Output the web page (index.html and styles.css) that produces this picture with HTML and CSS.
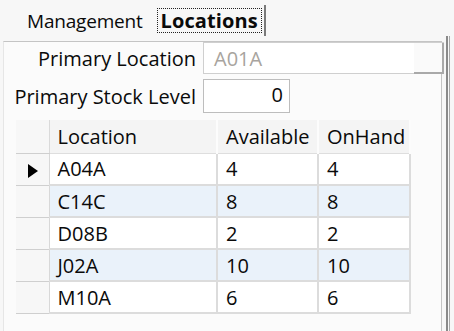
FILE: index.html
```html
<!DOCTYPE html>
<html>
<head>
<meta charset="utf-8">
<link rel="stylesheet" href="styles.css">
</head>
<body>
<div class="window">
  <div class="main">
    <div class="tabs">
      <div class="tab">Management</div>
      <div class="tab active"><span class="focus">Locations</span></div>
    </div>
    <div class="panel">
      <div class="form">
        <label class="lbl lbl1">Primary Location</label>
        <div class="combo">
          <span class="combo-text">A01A</span>
          <span class="combo-btn"></span>
        </div>
        <label class="lbl lbl2">Primary Stock Level</label>
        <div class="textbox">0</div>
      </div>
      <table class="grid">
        <thead>
          <tr>
            <th class="rh"></th>
            <th class="c1">Location</th>
            <th class="c2">Available</th>
            <th class="c3">OnHand</th>
          </tr>
        </thead>
        <tbody>
          <tr><td class="rh"><span class="arrow"></span></td><td>A04A</td><td>4</td><td>4</td></tr>
          <tr class="alt"><td class="rh"></td><td>C14C</td><td>8</td><td>8</td></tr>
          <tr><td class="rh"></td><td>D08B</td><td>2</td><td>2</td></tr>
          <tr class="alt"><td class="rh"></td><td>J02A</td><td>10</td><td>10</td></tr>
          <tr><td class="rh"></td><td>M10A</td><td>6</td><td>6</td></tr>
        </tbody>
      </table>
    </div>
  </div>
  <div class="edge"></div>
</div>
</body>
</html>
```

FILE: styles.css
```css
html, body {
  margin: 0;
  padding: 0;
  height: 100%;
}
body {
  background: #f7f7f7;
  font-family: "Open Sans", "Noto Sans", sans-serif;
  font-size: 20px;
  color: #0a0a0a;
  overflow: hidden;
}
.window {
  display: flex;
  height: 331px;
  width: 454px;
}
.main {
  width: 446px;
  display: flex;
  flex-direction: column;
}
.edge {
  width: 4px;
  margin-top: 36px;
  border-left: 2px solid #8a8a8a;
  border-right: 1px solid #a8a8a8;
  box-sizing: border-box;
}
.tabs {
  display: flex;
  align-items: flex-start;
  height: 41px;
  padding-left: 27px;
  padding-top: 5px;
  box-sizing: border-box;
}
.tab {
  font-size: 19px;
  letter-spacing: -0.2px;
  line-height: 24px;
  padding-top: 4px;
}
.tab.active {
  height: 31px;
  margin-left: 13px;
  padding: 3px 2px 0 1px;
  border-right: 2px solid #7a7a7a;
  font-weight: bold;
  font-size: 20px;
  letter-spacing: 0.1px;
  box-sizing: border-box;
}
.focus {
  display: block;
  border: 1px dotted #222;
  padding: 0 3px 0 3px;
  line-height: 23px;
}
.panel {
  flex: 1;
  margin-left: 3px;
  width: 439px;
  border-top: 1px solid #c4c4c4;
  border-left: 1px solid #e6e6e6;
  border-right: 1px solid #c4c4c4;
  background: #fbfbfb;
  box-sizing: border-box;
}
.form {
  display: grid;
  grid-template-columns: 192px 1fr;
  column-gap: 7px;
  row-gap: 5px;
  align-items: center;
}
.lbl {
  text-align: right;
  white-space: nowrap;
  letter-spacing: 0px;
}
.combo {
  height: 32px;
  border: 1px solid #cfcfcf;
  border-right: none;
  display: flex;
  align-items: center;
  position: relative;
  box-sizing: border-box;
  background: #fff;
  margin-right: -3px;
}
.combo-text {
  color: #a8a49e;
  padding-left: 10px;
}
.combo-btn {
  position: absolute;
  right: 0;
  top: 0;
  width: 30px;
  height: 31px;
  border-right: 2px solid #a9a9a9;
  border-bottom: 2px solid #a9a9a9;
  box-sizing: border-box;
  background: #fafafa;
}
.textbox {
  width: 87px;
  height: 34px;
  border: 1px solid #bdbdbd;
  background: #fff;
  box-sizing: border-box;
  text-align: right;
  padding-right: 6px;
  line-height: 30px;
}
.grid {
  margin-top: 7px;
  margin-left: 12px;
  border-collapse: collapse;
}
.grid th {
  height: 33px;
  font-weight: normal;
  text-align: left;
  padding: 0 0 0 8px;
  background: #f4f4f4;
  border-right: 2px solid #fcfcfc;
  border-bottom: 1px solid #dedede;
  box-sizing: border-box;
  white-space: nowrap;
}
.grid th.rh {
  border-right: 1px solid #dadada;
  border-bottom: 1px solid #cfcfcf;
  background: #f7f7f7;
}
.grid td {
  height: 32px;
  padding: 0 0 0 8px;
  background: #fff;
  border-right: 2px solid #dcdcdc;
  border-bottom: 2px solid #dcdcdc;
  box-sizing: border-box;
}
.grid tr.alt td {
  background: #eaf2fa;
}
.grid td.rh, .grid tr.alt td.rh {
  background: #f7f7f7;
  border-right: 1px solid #d8d8d8;
  border-bottom: 1px solid #cfcfcf;
  padding: 0 0 0 2px;
  text-align: center;
}
.c1 { width: 168px; }
.c2 { width: 101px; }
.c3 { width: 92px; }
.rh { width: 33px; }
.arrow {
  display: inline-block;
  width: 0;
  height: 0;
  border-top: 7px solid transparent;
  border-bottom: 7px solid transparent;
  border-left: 10px solid #000;
  vertical-align: middle;
}
```
